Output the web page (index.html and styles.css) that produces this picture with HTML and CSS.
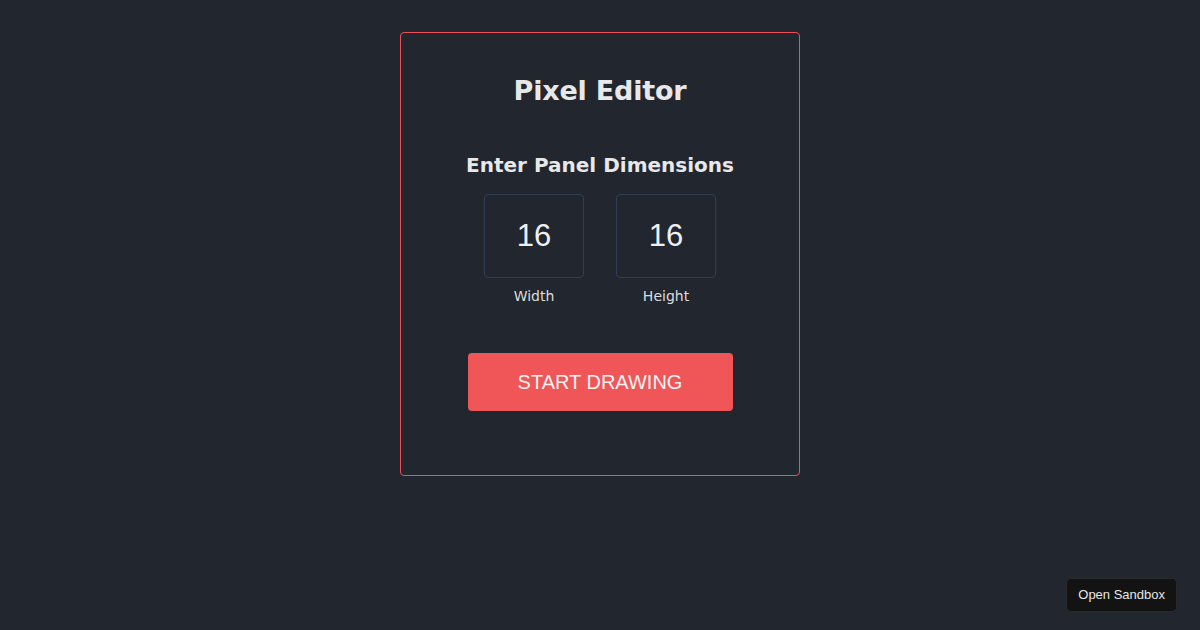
FILE: index.html
```html
<!DOCTYPE html>
<html lang="en">
<head>
    <meta charset="UTF-8">
    <meta name="viewport" content="width=device-width, initial-scale=1.0">
    <title>Pixel Editor</title>
    <link rel="stylesheet" href="styles.css">
</head>
<body>
    <div class="page">
        <div class="setup-card">
            <h1>Pixel Editor</h1>
            <h2>Enter Panel Dimensions</h2>
            <div class="dimensions">
                <label class="dimension">
                    <input type="text" value="16">
                    <span>Width</span>
                </label>
                <label class="dimension">
                    <input type="text" value="16">
                    <span>Height</span>
                </label>
            </div>
            <button class="start-button">START DRAWING</button>
        </div>
    </div>

    <a class="sandbox-link" href="#">Open Sandbox</a>
</body>
</html>
```

FILE: styles.css
```css
body {
    margin: 0;
    height: 100vh;
    background-color: #21262f;
    color: #e8e8e8;
    font-family: "DejaVu Sans", sans-serif;
    overflow: hidden;
}
.page {
    display: flex;
    justify-content: center;
    padding-top: 32px;
}
.setup-card {
    width: 398px;
    height: 442px;
    border: 1px solid #ef5057;
    border-radius: 4px;
    display: flex;
    flex-direction: column;
    align-items: center;
}
.setup-card h1 {
    margin: 40px 0 0;
    font-size: 27px;
    font-weight: bold;
    line-height: 36px;
    letter-spacing: -0.2px;
}
.setup-card h2 {
    margin: 43px 0 0;
    font-size: 20px;
    font-weight: bold;
    line-height: 26px;
}
.dimensions {
    display: flex;
    gap: 32px;
    margin-top: 16px;
}
.dimension {
    display: flex;
    flex-direction: column;
    align-items: center;
}
.dimension input {
    box-sizing: border-box;
    width: 100px;
    height: 84px;
    background: transparent;
    border: 1px solid #2f3d55;
    border-radius: 4px;
    color: #f0f0f0;
    font-family: "Liberation Sans", Arial, sans-serif;
    font-size: 31px;
    text-align: center;
    outline: none;
}
.dimension span {
    margin-top: 9px;
    font-size: 14px;
    line-height: 18px;
    color: #dcdcdc;
}
.start-button {
    margin-top: 48px;
    width: 265px;
    height: 58px;
    border: none;
    border-radius: 4px;
    background-color: #f05658;
    color: #f2f2f2;
    font-family: "Liberation Sans", Arial, sans-serif;
    font-size: 20px;
    cursor: pointer;
}
.sandbox-link {
    position: absolute;
    right: 23px;
    bottom: 18px;
    padding: 9px 11px;
    background-color: #131313;
    border: 1px solid #2a2a2a;
    border-radius: 5px;
    color: #e6e6e6;
    font-family: "Liberation Sans", Arial, sans-serif;
    font-size: 13px;
    line-height: 14px;
    text-decoration: none;
}
```
